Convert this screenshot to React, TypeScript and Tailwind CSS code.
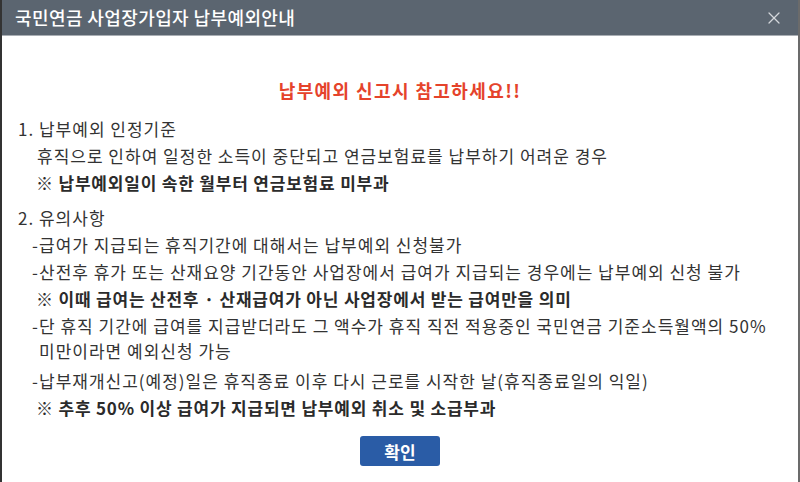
import { X } from 'lucide-react';

const font = { fontFamily: '"Noto Sans CJK KR", "Noto Sans", sans-serif' };

function Item({ children, className = '' }: { children: React.ReactNode; className?: string }) {
  return (
    <div className={`flex pl-[30px] ${className}`}>
      <span className="w-[7px] shrink-0">-</span>
      <span>{children}</span>
    </div>
  );
}

function Note({ children }: { children: React.ReactNode }) {
  return <div className="pl-[34px] font-bold text-[#2b2b2b] tracking-[0.8px]">{children}</div>;
}

export default function App() {
  return (
    <div
      className="w-[800px] h-[482px] flex flex-col bg-white border-l-2 border-l-[#333] border-r-2 border-r-[#6b6b6b] overflow-hidden"
      style={font}
    >
      {/* Header */}
      <div className="h-[36px] shrink-0 bg-[#5b6570] border-b border-[#a9aeb4] flex items-center justify-between pl-[13px] pr-[14px]">
        <h1 className="text-[18px] font-medium text-white tracking-[0.4px]">국민연금 사업장가입자 납부예외안내</h1>
        <X size={20} strokeWidth={1.5} className="text-[#d4d7db]" />
      </div>

      {/* Body */}
      <div className="flex-1 flex flex-col text-[17px] text-[#333] leading-[27px] tracking-[1px]">
        <p className="mt-[42px] text-center text-[18px] font-bold text-[#e5432b] leading-[24px] tracking-[1.4px]">
          납부예외 신고시 참고하세요!!
        </p>

        <div className="mt-[13px] pl-[16px]">1. 납부예외 인정기준</div>
        <div className="pl-[35px]">휴직으로 인하여 일정한 소득이 중단되고 연금보험료를 납부하기 어려운 경우</div>
        <Note>※ 납부예외일이 속한 월부터 연금보험료 미부과</Note>

        <div className="mt-[8px] pl-[16px]">2. 유의사항</div>
        <Item>급여가 지급되는 휴직기간에 대해서는 납부예외 신청불가</Item>
        <Item>산전후 휴가 또는 산재요양 기간동안 사업장에서 급여가 지급되는 경우에는 납부예외 신청 불가</Item>
        <Note>※ 이때 급여는 산전후 · 산재급여가 아닌 사업장에서 받는 급여만을 의미</Note>
        <Item className="leading-[25px] mt-[1px]">
          단 휴직 기간에 급여를 지급받더라도 그 액수가 휴직 직전 적용중인 국민연금 기준소득월액의 50%
          <br />
          미만이라면 예외신청 가능
        </Item>
        <Item className="mt-[4px]">납부재개신고(예정)일은 휴직종료 이후 다시 근로를 시작한 날(휴직종료일의 익일)</Item>
        <Note>※ 추후 50% 이상 급여가 지급되면 납부예외 취소 및 소급부과</Note>

        <div className="mt-[15px] flex justify-center">
          <button className="w-[80px] h-[30px] rounded-[3px] bg-[#2a5ca6] text-white text-[17px] font-bold leading-none tracking-normal">
            확인
          </button>
        </div>
      </div>
    </div>
  );
}
